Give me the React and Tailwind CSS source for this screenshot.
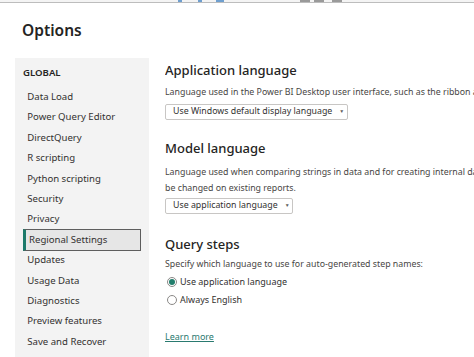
import React from 'react';

const navItems = [
  'Data Load',
  'Power Query Editor',
  'DirectQuery',
  'R scripting',
  'Python scripting',
  'Security',
  'Privacy',
  'Regional Settings',
  'Updates',
  'Usage Data',
  'Diagnostics',
  'Preview features',
  'Save and Recover',
];

const Dropdown = ({ label, width }) => (
  <div className={`flex items-center h-[16px] border border-[#c8c6c4] rounded-[2px] bg-white pl-[7px] text-[8.8px] text-[#323130] ${width}`}>
    <span>{label}</span>
    <span className="ml-[7px] text-[5px] text-[#605e5c]">▼</span>
  </div>
);

const Radio = ({ checked, label }) => (
  <label className="flex items-center h-[17.7px] text-[9px] text-[#323130]">
    <span className="w-[10px] h-[10px] ml-[2px] rounded-full border border-[#8a8886] flex items-center justify-center mr-[3px] bg-white">
      {checked && <span className="w-[6px] h-[6px] rounded-full bg-[#217e6c]" />}
    </span>
    {label}
  </label>
);

const App = () => {
  return (
    <div
      className="w-[474px] h-[357px] bg-white overflow-hidden"
      style={{ fontFamily: '"Noto Sans", "Open Sans", sans-serif' }}
    >
      {/* top strip of the window behind */}
      <div className="h-[3px] border-b border-[#bdbdbd] bg-[#f4f4f4] flex items-start">
        <div className="ml-[178px] w-[4px] h-[2px] bg-[#6f9fcf]" />
        <div className="ml-[16px] w-[4px] h-[2px] bg-[#6f9fcf]" />
        <div className="ml-[14px] w-[8px] h-[2px] bg-[#6f9fcf]" />
        <div className="ml-[76px] w-[10px] h-[2px] bg-[#9a9a9a]" />
        <div className="ml-[4px] w-[10px] h-[2px] bg-[#9a9a9a]" />
        <div className="ml-[8px] w-[10px] h-[2px] bg-[#9a9a9a]" />
      </div>

      <div className="h-[55px] pl-[22px] pt-[17px]">
        <h1 className="text-[15.5px] leading-[20px] font-semibold text-[#252423]">Options</h1>
      </div>

      <div className="flex">
        {/* Left nav */}
        <nav className="shrink-0 ml-[15px] w-[134px] h-[300px] bg-[#f3f3f3] pt-[7.3px] px-[8px] text-[9.6px] text-[#323130] whitespace-nowrap">
          <div className="h-[16px] leading-[16px] font-semibold text-[9.6px] text-[#252423]">GLOBAL</div>
          <div className="mt-[5.8px]">
            {navItems.map((item) =>
              item === 'Regional Settings' ? (
                <div
                  key={item}
                  className="h-[22px] -my-[0.8px] flex items-center pl-[3px] bg-[#e6e6e6] border border-[#5e5e5e] border-l-[3px] border-l-[#1d7a6a]"
                >
                  {item}
                </div>
              ) : (
                <div key={item} className="h-[20.4px] flex items-center pl-[4.3px]">
                  {item}
                </div>
              )
            )}
          </div>
        </nav>

        {/* Right content */}
        <div className="ml-[16px] flex-1 min-w-0 overflow-hidden whitespace-nowrap">
          <h2 className="mt-[2px] text-[13px] leading-[20px] font-medium text-[#252423]">Application language</h2>
          <p className="mt-[4px] text-[8.8px] leading-[16px] text-[#484644]">
            Language used in the Power BI Desktop user interface, such as the ribbon and the Options dialog.
          </p>
          <div className="mt-[4px]">
            <Dropdown label="Use Windows default display language" width="w-[183px]" />
          </div>

          <h2 className="mt-[18px] text-[13px] leading-[20px] font-medium text-[#252423]">Model language</h2>
          <p className="mt-[5.5px] text-[8.8px] leading-[16px] text-[#484644]">
            Language used when comparing strings in data and for creating internal date tables. It can't
            <br />
            be changed on existing reports.
          </p>
          <div className="mt-[2px]">
            <Dropdown label="Use application language" width="w-[128px]" />
          </div>

          <h2 className="mt-[20px] text-[13px] leading-[20px] font-medium text-[#252423]">Query steps</h2>
          <p className="mt-[2.5px] text-[8.8px] leading-[16px] text-[#484644]">
            Specify which language to use for auto-generated step names:
          </p>
          <div className="mt-[1px]">
            <Radio checked label="Use application language" />
            <Radio label="Always English" />
          </div>

          <a href="#" className="block mt-[20.5px] text-[9px] leading-[16px] text-[#2a7a70] underline">
            Learn more
          </a>
        </div>
      </div>
    </div>
  );
};

export default App;
